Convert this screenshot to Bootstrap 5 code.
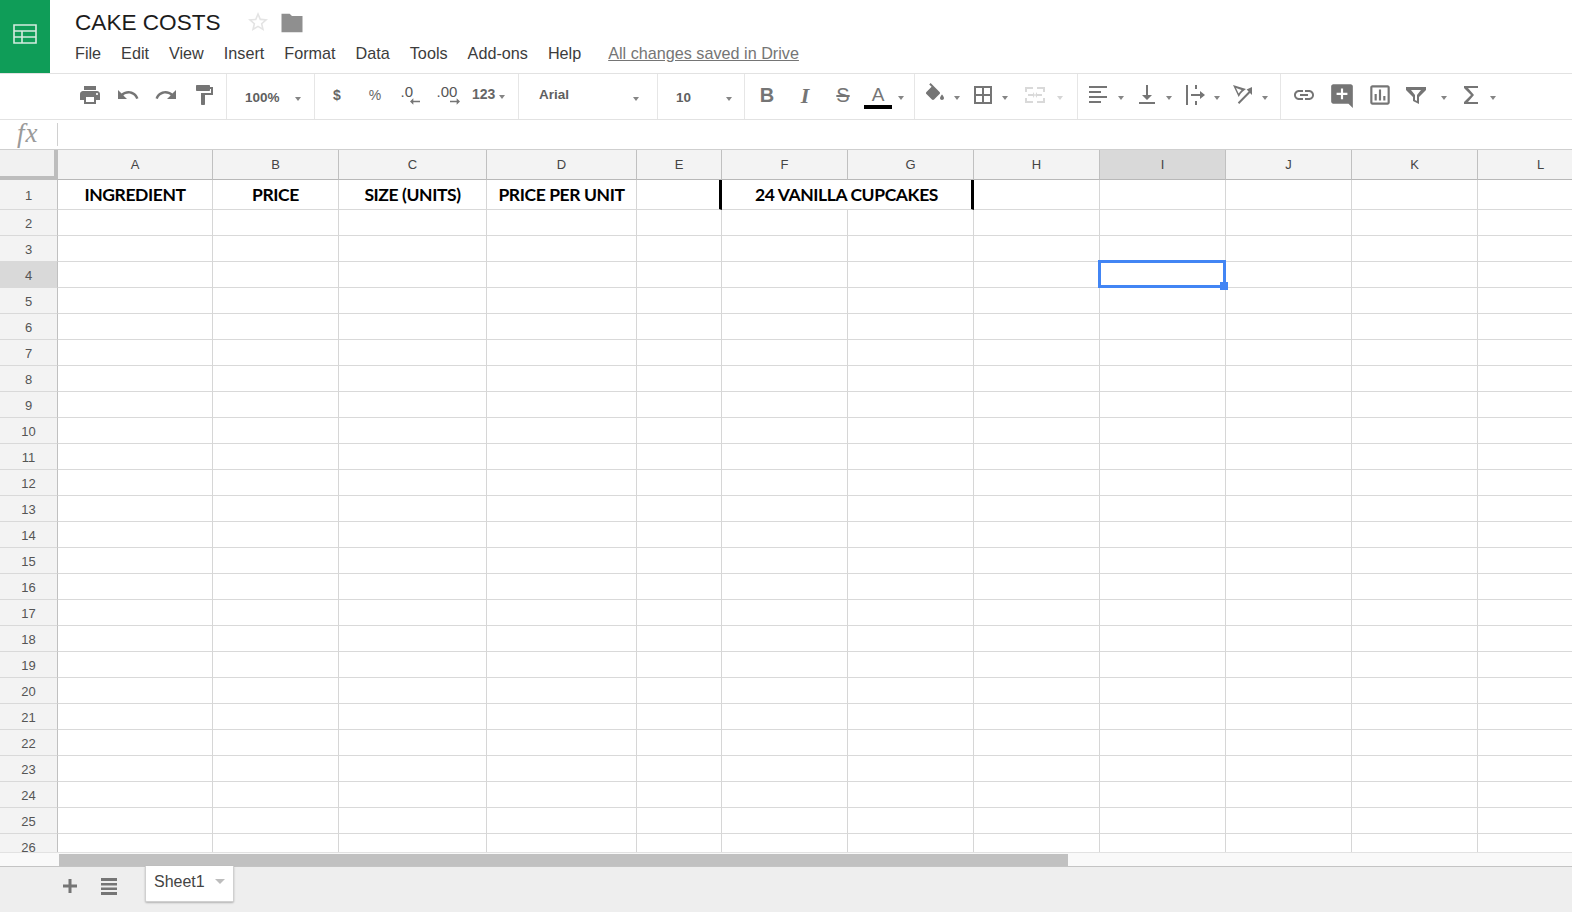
<!DOCTYPE html>
<html lang="en">
<head>
    <meta charset="UTF-8">
    <meta name="viewport" content="width=device-width, initial-scale=1.0">
    <title>CAKE COSTS - Google Sheets</title>
    <link rel="stylesheet" href="https://cdn.jsdelivr.net/npm/bootstrap@5.3.0/dist/css/bootstrap.min.css">
    <style>
        html, body { height: 100%; overflow: hidden; }
        body { font-family: "Liberation Sans", Arial, sans-serif; color: #333; background: #fff; }
        svg { display: block; fill: #757575; }

        .app-head { height: 74px; border-bottom: 1px solid #e2e2e2; }
        .logo-box { width: 50px; height: 73px; background: #0f9d58; padding-top: 23px; }
        .logo-box svg { fill: none; stroke: #d5ece0; stroke-width: 1.6; }
        .head-main { padding-left: 25px; }
        .doc-title { font-size: 22.6px; line-height: 26px; color: #1c1c1c; margin-top: 10px; width: 171px; }
        .star-icon { fill: #e4e4e4; margin-top: 10px; }
        .folder-icon { fill: #8f8f8f; margin-top: 9px; margin-left: 8px; }
        .menu-row { gap: 20px; font-size: 16.2px; line-height: 20px; margin-top: 6px; color: #3c3c3c; }
        .save-note { color: #757575; text-decoration: underline; margin-left: 7px; }

        .tool-bar { height: 46px; border-bottom: 1px solid #e2e2e2; font-size: 14px; color: #666; }
        .tool-group { height: 45px; border-right: 1px solid #e6e6e6; flex: none; }
        .g-print { width: 227px; padding-left: 71px; }
        .g-zoom { width: 88px; padding-left: 18px; }
        .g-num { width: 204px; padding-left: 3px; }
        .g-font { width: 139px; padding: 0 18px 0 20px; }
        .g-size { width: 87px; padding: 0 12px 0 18px; }
        .g-style { width: 170px; padding-left: 3px; }
        .g-cell { width: 163px; padding-left: 8px; }
        .g-align { width: 203px; padding-left: 9px; }
        .g-insert { border-right: 0; padding-left: 4px; }

        .tool-btn { width: 38px; height: 45px; flex: none; display: flex; align-items: center; justify-content: center; padding-bottom: 3px; }
        .tool-drop { width: 48px; height: 45px; flex: none; display: flex; align-items: center; padding-bottom: 3px; }
        .down-caret { width: 0; height: 0; border-left: 3.5px solid transparent; border-right: 3.5px solid transparent; border-top: 4px solid #858585; margin-left: 7px; margin-top: 5px; flex: none; }
        .caret-faint { border-top-color: #d5d5d5; }
        .caret-right { margin-left: auto; }
        .caret-zoom { margin-left: 15px; }
        .caret-color { margin-left: 6px; }
        .sel-text { line-height: 45px; font-weight: 700; font-size: 13.5px; color: #5f5f5f; }
        .sel-low { padding-top: 2px; }
        .sel-high { margin-top: -4px; }
        .num-btn { font-size: 14px; font-weight: 700; color: #666; }
        .dec-btn { font-size: 15px; font-weight: 400; color: #555; }
        .dec-wrap { line-height: 14px; margin-left: -6px; }
        .dec-wrap svg { margin-top: -1px; }
        .dec-arrow-a { margin-left: 9px; }
        .dec-arrow-b { margin-left: 13px; }
        .num-format { margin-left: 2px; }
        .glyph-b { font-size: 20px; font-weight: 700; color: #757575; }
        .glyph-i { font-size: 22px; font-weight: 700; font-style: italic; font-family: "Liberation Serif", serif; color: #757575; }
        .glyph-s { font-size: 20px; color: #757575; text-decoration: line-through; text-decoration-thickness: 2px; }
        .text-color { width: 28px; text-align: center; font-size: 19px; line-height: 21px; color: #757575; border-bottom: 4px solid #000; margin-top: 3px; margin-left: 2px; }
        .tool-drop.color-drop { width: 52px; }
        .merge-shift { margin-left: 4px; }
        .merge-shift svg { fill: #d9d9d9; }
        .merge-shift .down-caret { margin-left: 10px; }
        .filter-drop.tool-drop { width: 60px; padding-left: 5px; }
        .filter-drop .down-caret { margin-left: 13px; }

        .fx-bar { height: 30px; border-bottom: 1px solid #cfcfcf; }
        .fx-mark { width: 57px; padding-left: 17px; font-family: "Liberation Serif", serif; font-style: italic; font-size: 27px; line-height: 26px; letter-spacing: 1px; color: #9a9a9a; }
        .fx-line { width: 1px; height: 23px; background: #d0d0d0; margin-top: 3px; }

        .sheet-view { height: 702px; overflow: hidden; flex: none; }
        .sheet-grid { border-collapse: separate; border-spacing: 0; table-layout: fixed; width: 1604px; }
        .sheet-grid th, .sheet-grid td { box-sizing: border-box; border-right: 1px solid #d6d6d6; border-bottom: 1px solid #d9d9d9; padding: 0; text-align: center; overflow: visible; white-space: nowrap; }
        .sheet-grid thead th { height: 30px; background: #f3f3f3; border-right-color: #c0c0c0; border-bottom-color: #b8b8b8; font-weight: 400; font-size: 13px; color: #444; }
        .sheet-grid thead th.col-active { background: #d9d9d9; }
        .sheet-grid thead th.corner-cell { background: #f1f1f1; border-right: 4px solid #bdbdbd; border-bottom: 4px solid #bdbdbd; }
        .sheet-grid tbody th { background: #f3f3f3; font-weight: 400; font-size: 13px; padding-top: 2px; color: #555; border-right-color: #c0c0c0; }
        .sheet-grid tbody th.row-active { background: #d9d9d9; }
        .sheet-grid tbody tr { height: 26px; }
        .sheet-grid tbody tr.head-row { height: 30px; }
        .sheet-grid td.label-cell { font-family: Lato, "Liberation Sans", sans-serif; font-weight: 700; font-size: 17.5px; letter-spacing: -.4px; color: #000; padding-top: 1px; }
        .sheet-grid td.edge-right { border-right: 3px solid #000; }
        .pick-box { position: absolute; left: -2px; top: -2px; width: 128px; height: 28px; border: 3px solid #4285f4; pointer-events: none; }
        .pick-dot { position: absolute; right: -5px; bottom: -5px; width: 8px; height: 8px; background: #4285f4; }

        .scroll-row { height: 15px; background: #f9f9f9; border-bottom: 1px solid #c4c4c4; border-top: 1px solid #e2e2e2; }
        .scroll-thumb { width: 1009px; margin-left: 59px; margin-top: 1px; height: 12px; background: #c1c1c1; }

        .tab-bar { height: 45px; background: #eee; flex: none; }
        .tab-btn { width: 39px; height: 38px; }
        .tab-add { margin-left: 50px; }
        .sheet-tab { width: 89px; height: 36px; margin-left: 17px; margin-top: -1px; background: #fff; border: 1px solid #d0d0d0; border-top: 0; border-radius: 0 0 2px 2px; box-shadow: 0 1px 2px rgba(0,0,0,.25); font-size: 16px; color: #444; padding-left: 8px; position: relative; line-height: 32px; }
        .tab-caret { position: absolute; left: 69px; top: 13px; width: 0; height: 0; border-left: 5px solid transparent; border-right: 5px solid transparent; border-top: 5px solid #bdbdbd; }
    </style>
</head>
<body class="d-flex flex-column">

    <header class="app-head d-flex flex-shrink-0">
        <div class="logo-box d-flex justify-content-center">
            <svg width="26" height="22" viewBox="0 0 26 22"><path d="M2 2h22v18H2zM2 8h22M2 14h22M10 8v12"/></svg>
        </div>
        <div class="head-main flex-grow-1">
            <div class="d-flex align-items-start">
                <div class="doc-title">CAKE COSTS</div>
                <svg class="star-icon" width="24" height="24" viewBox="0 0 24 24"><path d="M22 9.24l-7.19-.62L12 2 9.19 8.63 2 9.24l5.46 4.73L5.82 21 12 17.27 18.18 21l-1.63-7.03L22 9.24zM12 15.4l-3.76 2.27 1-4.28-3.32-2.88 4.38-.38L12 6.1l1.71 4.04 4.38.38-3.32 2.88 1 4.28L12 15.4z"/></svg>
                <svg class="folder-icon" width="28" height="28" viewBox="0 0 24 24"><path d="M10 4H3v16h18V6h-9l-2-2z"/></svg>
            </div>
            <div class="menu-row d-flex">
                <span>File</span><span>Edit</span><span>View</span><span>Insert</span><span>Format</span><span>Data</span><span>Tools</span><span>Add-ons</span><span>Help</span>
                <span class="save-note">All changes saved in Drive</span>
            </div>
        </div>
    </header>

    <div class="tool-bar d-flex flex-shrink-0">
        <div class="tool-group g-print d-flex">
            <div class="tool-btn"><svg width="24" height="24" viewBox="0 0 24 24"><path d="M19 8H5c-1.66 0-3 1.34-3 3v6h4v4h12v-4h4v-6c0-1.66-1.34-3-3-3zm-3 11H8v-5h8v5zm3-7c-.55 0-1-.45-1-1s.45-1 1-1 1 .45 1 1-.45 1-1 1zm-1-9H6v4h12V3z"/></svg></div>
            <div class="tool-btn"><svg width="24" height="24" viewBox="0 0 24 24"><path d="M12.5 8c-2.65 0-5.05.99-6.9 2.6L2 7v9h9l-3.62-3.62c1.39-1.16 3.16-1.88 5.12-1.88 3.54 0 6.55 2.31 7.6 5.5l2.37-.78C21.08 11.03 17.15 8 12.5 8z"/></svg></div>
            <div class="tool-btn"><svg width="24" height="24" viewBox="0 0 24 24"><path d="M18.4 10.6C16.55 8.99 14.15 8 11.5 8c-4.65 0-8.58 3.03-9.96 7.22L3.9 16c1.05-3.19 4.05-5.5 7.6-5.5 1.95 0 3.73.72 5.12 1.88L13 16h9V7l-3.6 3.6z"/></svg></div>
            <div class="tool-btn"><svg width="24" height="24" viewBox="0 0 24 24"><path d="M18 4V3c0-.55-.45-1-1-1H5c-.55 0-1 .45-1 1v4c0 .55.45 1 1 1h12c.55 0 1-.45 1-1V6h1v4H9v11c0 .55.45 1 1 1h2c.55 0 1-.45 1-1v-9h8V4h-3z"/></svg></div>
        </div>
        <div class="tool-group g-zoom d-flex align-items-center">
            <span class="sel-text sel-low">100%</span><span class="down-caret caret-zoom"></span>
        </div>
        <div class="tool-group g-num d-flex">
            <div class="tool-btn num-btn">$</div>
            <div class="tool-btn num-btn fw-normal">%</div>
            <div class="tool-btn dec-btn">
                <div class="dec-wrap"><div>.0</div><svg class="dec-arrow-a" width="10" height="7" viewBox="0 0 12 8"><path d="M0 4l4-4v3h8v2H4v3z"/></svg></div>
            </div>
            <div class="tool-btn dec-btn">
                <div class="dec-wrap"><div>.00</div><svg class="dec-arrow-b" width="10" height="7" viewBox="0 0 12 8"><path d="M12 4L8 0v3H0v2h8v3z"/></svg></div>
            </div>
            <div class="d-flex align-items-center num-btn sel-high num-format"><span>123</span><span class="down-caret ms-1"></span></div>
        </div>
        <div class="tool-group g-font d-flex align-items-center">
            <span class="sel-text sel-high">Arial</span><span class="down-caret caret-right"></span>
        </div>
        <div class="tool-group g-size d-flex align-items-center">
            <span class="sel-text sel-low">10</span><span class="down-caret caret-right"></span>
        </div>
        <div class="tool-group g-style d-flex">
            <div class="tool-btn glyph-b">B</div>
            <div class="tool-btn glyph-i">I</div>
            <div class="tool-btn glyph-s">S</div>
            <div class="tool-drop color-drop"><div class="text-color">A</div><span class="down-caret caret-color"></span></div>
        </div>
        <div class="tool-group g-cell d-flex">
            <div class="tool-drop"><svg width="24" height="24" viewBox="0 0 24 24"><path d="M7.62 0L6.21 1.41l2.38 2.38-5.15 5.15c-.59.59-.59 1.54 0 2.12l5.5 5.5c.58.58 1.54.58 2.12 0l5.5-5.5c.59-.58.59-1.53 0-2.12zM19 11.5s-2 2.17-2 3.5c0 1.1.9 2 2 2s2-.9 2-2c0-1.33-2-3.5-2-3.5z"/></svg><span class="down-caret"></span></div>
            <div class="tool-drop"><svg width="24" height="24" viewBox="0 0 24 24"><path d="M3 3v18h18V3H3zm8 16H5v-6h6v6zm0-8H5V5h6v6zm8 8h-6v-6h6v6zm0-8h-6V5h6v6z"/></svg><span class="down-caret"></span></div>
            <div class="tool-drop merge-shift"><svg width="24" height="24" viewBox="0 0 24 24"><path d="M2 4h8v2H4v3H2zM22 4h-8v2h6v3h2zM2 20h8v-2H4v-3H2zM22 20h-8v-2h6v-3h2zM5 11h5V9l2 3-2 3v-2H5zM19 11h-5V9l-2 3 2 3v-2h5z"/></svg><span class="down-caret caret-faint"></span></div>
        </div>
        <div class="tool-group g-align d-flex">
            <div class="tool-drop"><svg width="24" height="24" viewBox="0 0 24 24"><path d="M2 3h18v2H2zM2 8h12v2H2zM2 13h18v2H2zM2 18h12v2H2z"/></svg><span class="down-caret"></span></div>
            <div class="tool-drop"><svg width="24" height="24" viewBox="0 0 24 24"><path d="M17 12h-4V2h-2v10H7l5 5zM4 19v2h16v-2z"/></svg><span class="down-caret"></span></div>
            <div class="tool-drop"><svg width="24" height="24" viewBox="0 0 24 24"><path d="M3 2h2v20H3zM12 2h2v4h-2zM12 18h2v4h-2zM8 11h9V8l5 4-5 4v-3H8z"/></svg><span class="down-caret"></span></div>
            <div class="tool-drop"><svg width="24" height="24" viewBox="0 0 24 24"><path d="M2 2l13 4-3.2 2.4-2 2.2L7.700 14zM5 5l2.600 5.600 3-3.600zM21 4v8l-2-2-10.800 11L6.800 19.600 17.600 8.600 15.600 6.600z"/></svg><span class="down-caret"></span></div>
        </div>
        <div class="tool-group g-insert d-flex">
            <div class="tool-btn"><svg width="24" height="24" viewBox="0 0 24 24"><path d="M3.900 12c0-1.710 1.390-3.100 3.100-3.100h4V7H7c-2.760 0-5 2.240-5 5s2.240 5 5 5h4v-1.900H7c-1.710 0-3.100-1.390-3.100-3.100zM8 13h8v-2H8v2zm9-6h-4v1.900h4c1.710 0 3.100 1.390 3.100 3.100s-1.390 3.100-3.100 3.100h-4V17h4c2.760 0 5-2.240 5-5s-2.240-5-5-5z"/></svg></div>
            <div class="tool-btn"><svg width="26" height="26" viewBox="0 0 24 24"><path d="M20 2H4c-1.100 0-2 .9-2 2v14c0 1.100.9 2 2 2h14l4 4V4c0-1.100-.9-2-2-2zm-3 10h-4v4h-2v-4H7v-2h4V6h2v4h4v2z"/></svg></div>
            <div class="tool-btn"><svg width="26" height="26" viewBox="0 0 24 24"><path d="M19 3H5c-1.100 0-2 .9-2 2v14c0 1.100.9 2 2 2h14c1.100 0 2-.9 2-2V5c0-1.100-.9-2-2-2zm0 16H5V5h14v14zM7 11h2v6H7zm4-4h2v10h-2zm4 6h2v4h-2z"/></svg></div>
            <div class="tool-drop filter-drop"><svg width="24" height="24" viewBox="0 0 24 24"><path fill-rule="evenodd" d="M2 4h20v3l-7 7v7l-6-3v-4L2 7zM7 7l4 5v5l2 1v-6l4-5z"/></svg><span class="down-caret"></span></div>
            <div class="tool-drop"><svg width="24" height="24" viewBox="0 0 24 24"><path d="M19 3H5v2l7 7-7 7v2h14v-2H9l6-7-6-7h10z"/></svg><span class="down-caret"></span></div>
        </div>
    </div>

    <div class="fx-bar d-flex flex-shrink-0">
        <div class="fx-mark">fx</div>
        <div class="fx-line"></div>
    </div>

    <div class="sheet-view">
        <table class="sheet-grid">
            <colgroup id="gridCols"></colgroup>
            <thead><tr id="gridHead"></tr></thead>
            <tbody id="gridBody"></tbody>
        </table>
    </div>

    <div class="scroll-row flex-shrink-0"><div class="scroll-thumb"></div></div>

    <footer class="tab-bar d-flex">
        <div class="tab-btn tab-add d-flex align-items-center justify-content-center"><svg width="24" height="24" viewBox="0 0 24 24"><path d="M10.500 5h3v5.500H19v3h-5.500V19h-3v-5.500H5v-3h5.500z"/></svg></div>
        <div class="tab-btn d-flex align-items-center justify-content-center"><svg width="24" height="24" viewBox="0 0 24 24"><path d="M4 4h16v3H4zM4 9h16v2.500H4zM4 13.500h16V16H4zM4 18h16v3H4z"/></svg></div>
        <div class="sheet-tab">Sheet1<span class="tab-caret"></span></div>
    </footer>

    <script>
        const letters = ["A", "B", "C", "D", "E", "F", "G", "H", "I", "J", "K", "L"];
        const widths = [155, 126, 148, 150, 85, 126, 126, 126, 126, 126, 126, 126];

        document.getElementById("gridCols").innerHTML =
            `<col style="width:58px">` + widths.map(w => `<col style="width:${w}px">`).join("");

        document.getElementById("gridHead").innerHTML =
            `<th class="corner-cell"></th>` +
            letters.map(l => `<th class="${l === "I" ? "col-active" : ""}">${l}</th>`).join("");

        let linhas = `<tr class="head-row"><th>1</th>
            <td class="label-cell">INGREDIENT</td>
            <td class="label-cell">PRICE</td>
            <td class="label-cell">SIZE (UNITS)</td>
            <td class="label-cell">PRICE PER UNIT</td>
            <td class="edge-right"></td>
            <td class="label-cell edge-right" colspan="2">24 VANILLA CUPCAKES</td>
            <td></td><td></td><td></td><td></td><td></td></tr>`;

        for (let r = 2; r <= 26; r++) {
            let celulas = "";
            for (const l of letters) {
                const marcada = r === 4 && l === "I";
                celulas += marcada
                    ? `<td class="position-relative"><div class="pick-box"><div class="pick-dot"></div></div></td>`
                    : "<td></td>";
            }
            linhas += `<tr><th class="${r === 4 ? "row-active" : ""}">${r}</th>${celulas}</tr>`;
        }
        document.getElementById("gridBody").innerHTML = linhas;
    </script>

    <script src="https://cdn.jsdelivr.net/npm/bootstrap@5.3.0/dist/js/bootstrap.bundle.min.js"></script>
</body>
</html>
